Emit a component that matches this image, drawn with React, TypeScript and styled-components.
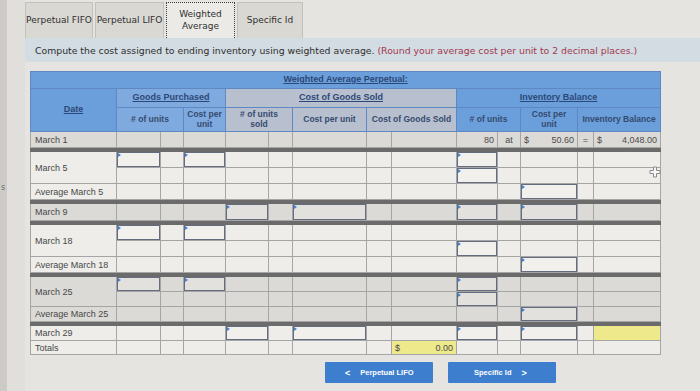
import React from "react";
import styled, { createGlobalStyle, css } from "styled-components";

const GlobalStyle = createGlobalStyle`
  html, body { margin: 0; padding: 0; }
  body { background: #e6e4e0; font-family: "Liberation Sans", Arial, sans-serif; }
`;

type Tone = "blue" | "light" | "gray";
const toneColor: Record<Tone, string> = {
  blue: "#6a9fdb",
  light: "#7eaadf",
  gray: "#b8bfcf",
};

const Page = styled.div`
  position: relative;
  display: flex;
  width: 700px;
  height: 391px;
  overflow: hidden;
  background: #e6e4e0;
`;

const Side = styled.aside`
  flex: 0 0 25px;
  background: linear-gradient(90deg, #cecbc7 0 7px, #e1dfdb 7px);
  overflow: hidden;
`;

const SideStub = styled.span`
  display: block;
  margin: 183px 0 0 1px;
  font: 8px "DejaVu Sans", Verdana, sans-serif;
  color: #6d6d6d;
`;

const Main = styled.main`
  flex: 1;
  min-width: 0;
  display: flex;
  flex-direction: column;
`;

const TabBar = styled.nav`
  display: flex;
  gap: 2px;
  height: 36px;
  padding-top: 2px;
`;

const Tab = styled.div<{ $w: number; $active?: boolean }>`
  width: ${(p) => p.$w}px;
  box-sizing: border-box;
  display: flex;
  align-items: center;
  justify-content: center;
  text-align: center;
  font: 9px/1.3 "DejaVu Sans", Verdana, sans-serif;
  color: #2f2f2f;
  background: #dad8d3;
  border: 1px solid #c3c1bc;
  border-bottom: none;
  ${(p) =>
    p.$active &&
    css`
      background: #ebeae6;
      border: 1px dotted #3a3a3a;
      border-bottom: none;
    `}
`;

const Instruction = styled.p`
  margin: 0;
  height: 24px;
  display: flex;
  align-items: center;
  padding-left: 10px;
  background: #d3dce2;
  font: 9.3px "DejaVu Sans", Verdana, sans-serif;
  color: #2e2e2e;
  white-space: nowrap;
`;

const Hint = styled.span`
  color: #a2394f;
  margin-left: 3px;
`;

const TableArea = styled.section`
  padding: 9px 0 0 5px;
`;

const Grid = styled.table`
  width: 630px;
  border-collapse: collapse;
  table-layout: fixed;
`;

const HeadCell = styled.th<{ $tone: Tone; $h: number }>`
  background: ${(p) => toneColor[p.$tone]};
  border: 1px solid #5d88c1;
  padding: 0 2px;
  height: ${(p) => p.$h}px;
  font: bold 9px/1.1 "Liberation Sans", Arial, sans-serif;
  color: #2c4877;
  text-align: center;
  vertical-align: middle;
  white-space: nowrap;
`;

const SubHead = styled(HeadCell)`
  font-size: 8.5px;
  color: #354b6e;
`;

const Link = styled.span`
  text-decoration: underline;
`;

const Row = styled.tr<{ $shade: boolean }>`
  background: ${(p) => (p.$shade ? "#dcdad6" : "#eeede9")};
`;

const Cell = styled.td<{ $h: number; $align?: "left" | "right" | "center" }>`
  border: 1px solid #a5a5a5;
  padding: 0 3px;
  height: ${(p) => p.$h}px;
  font-size: 9px;
  color: #4b4b4b;
  text-align: ${(p) => p.$align ?? "left"};
  vertical-align: middle;
  white-space: nowrap;
  overflow: hidden;
`;

const DateCell = styled(Cell)`
  padding-left: 4px;
  color: #474747;
`;

const InputCell = styled.td<{ $h: number }>`
  position: relative;
  border: 1px solid #a5a5a5;
  padding: 0;
  height: ${(p) => p.$h}px;
  background: rgba(255, 255, 255, 0.2);
  box-shadow: inset 0 0 0 1px #646c7e;
  &::before {
    content: "";
    position: absolute;
    top: 1px;
    left: 1px;
    border-style: solid;
    border-width: 2.5px 0 2.5px 3.5px;
    border-color: transparent transparent transparent #4580d4;
  }
`;

const YellowCell = styled(Cell)`
  background: #eee98b;
`;

const Money = styled.span`
  display: flex;
  justify-content: space-between;
`;

const SepCell = styled.td`
  height: 3px;
  padding: 0;
  background: #6b6b6b;
  border: 1px solid #6b6b6b;
`;

const Footer = styled.footer`
  display: flex;
  gap: 15px;
  padding: 7px 0 0 300px;
`;

const NavButton = styled.button<{ $pad: number }>`
  width: 108px;
  height: 21px;
  box-sizing: border-box;
  display: flex;
  align-items: center;
  gap: 10px;
  padding: 0 0 0 ${(p) => p.$pad}px;
  border: none;
  border-radius: 1px;
  background: #3d7ecf;
  color: #ffffff;
  font: bold 7.5px "Liberation Sans", Arial, sans-serif;
`;

const Chevron = styled.span`
  font-size: 9px;
  font-weight: bold;
`;

const Cursor = styled.svg`
  position: absolute;
  left: 649px;
  top: 166px;
`;

type Spec =
  | null
  | "in"
  | { text: string; align?: "left" | "right" | "center" }
  | { money: string; yellow?: boolean }
  | { yellow: true };

type DataRow = {
  label?: string;
  labelSpan?: number;
  shade: boolean;
  h: number;
  cells: Spec[];
};

const blank = (): Spec[] => Array.from({ length: 13 }, () => null);
const withCells = (entries: Record<number, Spec>): Spec[] => {
  const arr = blank();
  Object.entries(entries).forEach(([k, v]) => {
    arr[Number(k)] = v;
  });
  return arr;
};

// column indexes: 0 GP units,1 at,2 GP cost,3 COGS units,4 at,5 COGS cost,6 =,7 COGS value,
// 8 INV units,9 at,10 INV cost,11 =,12 INV value
const groups: DataRow[][] = [
  [
    {
      label: "March 1",
      shade: true,
      h: 15,
      cells: withCells({
        8: { text: "80", align: "right" },
        9: { text: "at", align: "center" },
        10: { money: "50.60" },
        11: { text: "=", align: "center" },
        12: { money: "4,048.00" },
      }),
    },
  ],
  [
    { label: "March 5", labelSpan: 2, shade: false, h: 15, cells: withCells({ 0: "in", 2: "in", 8: "in" }) },
    { shade: false, h: 15, cells: withCells({ 8: "in" }) },
    { label: "Average March 5", shade: false, h: 15, cells: withCells({ 10: "in" }) },
  ],
  [{ label: "March 9", shade: true, h: 16, cells: withCells({ 3: "in", 5: "in", 8: "in", 10: "in" }) }],
  [
    { label: "March 18", labelSpan: 2, shade: false, h: 15, cells: withCells({ 0: "in", 2: "in" }) },
    { shade: false, h: 15, cells: withCells({ 8: "in" }) },
    { label: "Average March 18", shade: false, h: 15, cells: withCells({ 10: "in" }) },
  ],
  [
    { label: "March 25", labelSpan: 2, shade: true, h: 14, cells: withCells({ 0: "in", 2: "in", 8: "in" }) },
    { shade: true, h: 14, cells: withCells({ 8: "in" }) },
    { label: "Average March 25", shade: true, h: 14, cells: withCells({ 10: "in" }) },
  ],
  [
    { label: "March 29", shade: false, h: 14, cells: withCells({ 3: "in", 5: "in", 8: "in", 10: "in", 12: { yellow: true } }) },
    { label: "Totals", shade: false, h: 13, cells: withCells({ 7: { money: "0.00", yellow: true } }) },
  ],
];

const colWidths = [86, 44, 23, 42, 43, 24, 74, 25, 65, 41, 23, 57, 16, 67];

const renderSpec = (spec: Spec, h: number, key: number) => {
  if (spec === null) return <Cell key={key} $h={h} />;
  if (spec === "in") return <InputCell key={key} $h={h} />;
  if ("money" in spec) {
    const Target = spec.yellow ? YellowCell : Cell;
    return (
      <Target key={key} $h={h}>
        <Money>
          <span>$</span>
          <span>{spec.money}</span>
        </Money>
      </Target>
    );
  }
  if ("text" in spec)
    return (
      <Cell key={key} $h={h} $align={spec.align}>
        {spec.text}
      </Cell>
    );
  return <YellowCell key={key} $h={h} />;
};

export default function App() {
  return (
    <>
      <GlobalStyle />
      <Page>
        <Side>
          <SideStub>s</SideStub>
        </Side>
        <Main>
          <TabBar>
            <Tab $w={68}>Perpetual FIFO</Tab>
            <Tab $w={69}>Perpetual LIFO</Tab>
            <Tab $w={69} $active>
              Weighted
              <br />
              Average
            </Tab>
            <Tab $w={66}>Specific Id</Tab>
          </TabBar>
          <Instruction>
            Compute the cost assigned to ending inventory using weighted average.
            <Hint>(Round your average cost per unit to 2 decimal places.)</Hint>
          </Instruction>
          <TableArea>
            <Grid>
              <colgroup>
                {colWidths.map((w, i) => (
                  <col key={i} style={{ width: w }} />
                ))}
              </colgroup>
              <thead>
                <tr>
                  <HeadCell $tone="blue" $h={16} colSpan={14}>
                    <Link>Weighted Average Perpetual:</Link>
                  </HeadCell>
                </tr>
                <tr>
                  <HeadCell $tone="blue" $h={18} rowSpan={2}>
                    <Link>Date</Link>
                  </HeadCell>
                  <HeadCell $tone="light" $h={18} colSpan={3}>
                    <Link>Goods Purchased</Link>
                  </HeadCell>
                  <HeadCell $tone="gray" $h={18} colSpan={5}>
                    <Link>Cost of Goods Sold</Link>
                  </HeadCell>
                  <HeadCell $tone="blue" $h={18} colSpan={5}>
                    <Link>Inventory Balance</Link>
                  </HeadCell>
                </tr>
                <tr>
                  <SubHead $tone="light" $h={23} colSpan={2}># of units</SubHead>
                  <SubHead $tone="light" $h={23}>
                    Cost per
                    <br />
                    unit
                  </SubHead>
                  <SubHead $tone="gray" $h={23} colSpan={2}>
                    # of units
                    <br />
                    sold
                  </SubHead>
                  <SubHead $tone="gray" $h={23}>Cost per unit</SubHead>
                  <SubHead $tone="gray" $h={23} colSpan={2}>Cost of Goods Sold</SubHead>
                  <SubHead $tone="blue" $h={23} colSpan={2}># of units</SubHead>
                  <SubHead $tone="blue" $h={23}>
                    Cost per
                    <br />
                    unit
                  </SubHead>
                  <SubHead $tone="blue" $h={23} colSpan={2}>Inventory Balance</SubHead>
                </tr>
              </thead>
              <tbody>
                {groups.map((group, gi) => (
                  <React.Fragment key={gi}>
                    {gi > 0 && (
                      <tr>
                        <SepCell colSpan={14} />
                      </tr>
                    )}
                    {group.map((row, ri) => (
                      <Row key={ri} $shade={row.shade}>
                        {row.label && (
                          <DateCell $h={row.h} rowSpan={row.labelSpan ?? 1}>
                            {row.label}
                          </DateCell>
                        )}
                        {row.cells.map((c, ci) => renderSpec(c, row.h, ci))}
                      </Row>
                    ))}
                  </React.Fragment>
                ))}
              </tbody>
            </Grid>
          </TableArea>
          <Footer>
            <NavButton $pad={20}>
              <Chevron>&lt;</Chevron>
              <span>Perpetual LIFO</span>
            </NavButton>
            <NavButton $pad={26}>
              <span>Specific Id</span>
              <Chevron>&gt;</Chevron>
            </NavButton>
          </Footer>
        </Main>
        <Cursor width="12" height="12" viewBox="0 0 12 12">
          <path
            d="M4.5 1 H7.5 V4.5 H11 V7.5 H7.5 V11 H4.5 V7.5 H1 V4.5 H4.5 Z"
            fill="#f7f7f7"
            stroke="#8a8a8a"
            strokeWidth="1"
          />
        </Cursor>
      </Page>
    </>
  );
}
